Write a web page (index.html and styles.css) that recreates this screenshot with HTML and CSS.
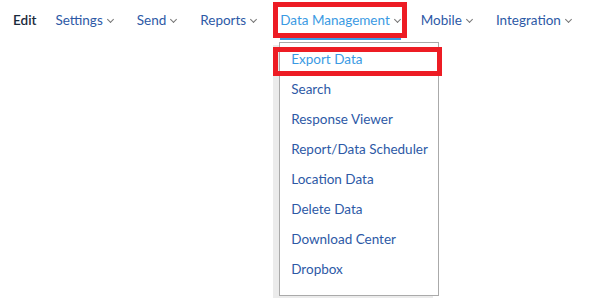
FILE: index.html
```html
<!DOCTYPE html>
<html>
<head>
<meta charset="utf-8">
<link rel="stylesheet" href="styles.css">
</head>
<body>
<nav class="topnav">
  <ul class="nav-list">
    <li class="nav-item edit">Edit</li>
    <li class="nav-item">Settings<span class="chev"></span></li>
    <li class="nav-item">Send<span class="chev"></span></li>
    <li class="nav-item">Reports<span class="chev"></span></li>
    <li class="nav-item active">Data Management<span class="chev"></span>
      <span class="annot annot-nav"></span>
      <ul class="dropdown">
        <li class="dd-item current">Export Data<span class="annot annot-dd"></span></li>
        <li class="dd-item">Search</li>
        <li class="dd-item">Response Viewer</li>
        <li class="dd-item">Report/Data Scheduler</li>
        <li class="dd-item">Location Data</li>
        <li class="dd-item">Delete Data</li>
        <li class="dd-item">Download Center</li>
        <li class="dd-item">Dropbox</li>
      </ul>
    </li>
    <li class="nav-item">Mobile<span class="chev"></span></li>
    <li class="nav-item">Integration<span class="chev"></span></li>
  </ul>
</nav>
</body>
</html>
```
FILE: styles.css
```css
html, body {
  margin: 0;
  padding: 0;
  background: #ffffff;
}
body {
  font-family: "Lato", "Open Sans", sans-serif;
  font-size: 13.5px;
  color: #2d59a6;
  width: 590px;
  height: 298px;
  overflow: hidden;
}
.topnav {
  padding: 0 0 0 13px;
}
.nav-list {
  list-style: none;
  margin: 0;
  padding: 0;
  display: flex;
  align-items: flex-start;
}
.nav-item {
  position: relative;
  height: 38px;
  line-height: 40px;
  margin-right: 23px;
  display: flex;
  align-items: flex-start;
  white-space: nowrap;
}
.nav-item.edit {
  color: #1a2a3c;
  font-weight: 600;
  margin-right: 19px;
}
.chev {
  width: 4px;
  height: 4px;
  border-right: 1.2px solid #767676;
  border-bottom: 1.2px solid #767676;
  transform: rotate(45deg);
  margin: 17px 1px 0 5px;
}
.nav-item.active {
  color: #3a9ae3;
  border-bottom: 2px solid #3a9ae3;
  margin-right: 20px;
}
.annot {
  position: absolute;
  border: 5px solid #ed1c24;
  pointer-events: none;
}
.annot-nav {
  left: -7px;
  right: -6px;
  top: 2px;
  height: 26px;
}
.dropdown {
  position: absolute;
  left: -1px;
  top: 42px;
  width: 158px;
  margin: 0;
  padding: 1px 0 11px 0;
  list-style: none;
  background: #ffffff;
  border: 1px solid #aaaaaa;
  box-shadow: -6px 3px 0 #ebebeb;
  z-index: 2;
}
.dd-item {
  position: relative;
  height: 30px;
  line-height: 30px;
  padding-left: 11px;
  color: #2d59a6;
}
.dd-item.current {
  color: #3a9ae3;
}
.annot-dd {
  left: -7px;
  top: 3px;
  width: 159px;
  height: 19px;
}
```
